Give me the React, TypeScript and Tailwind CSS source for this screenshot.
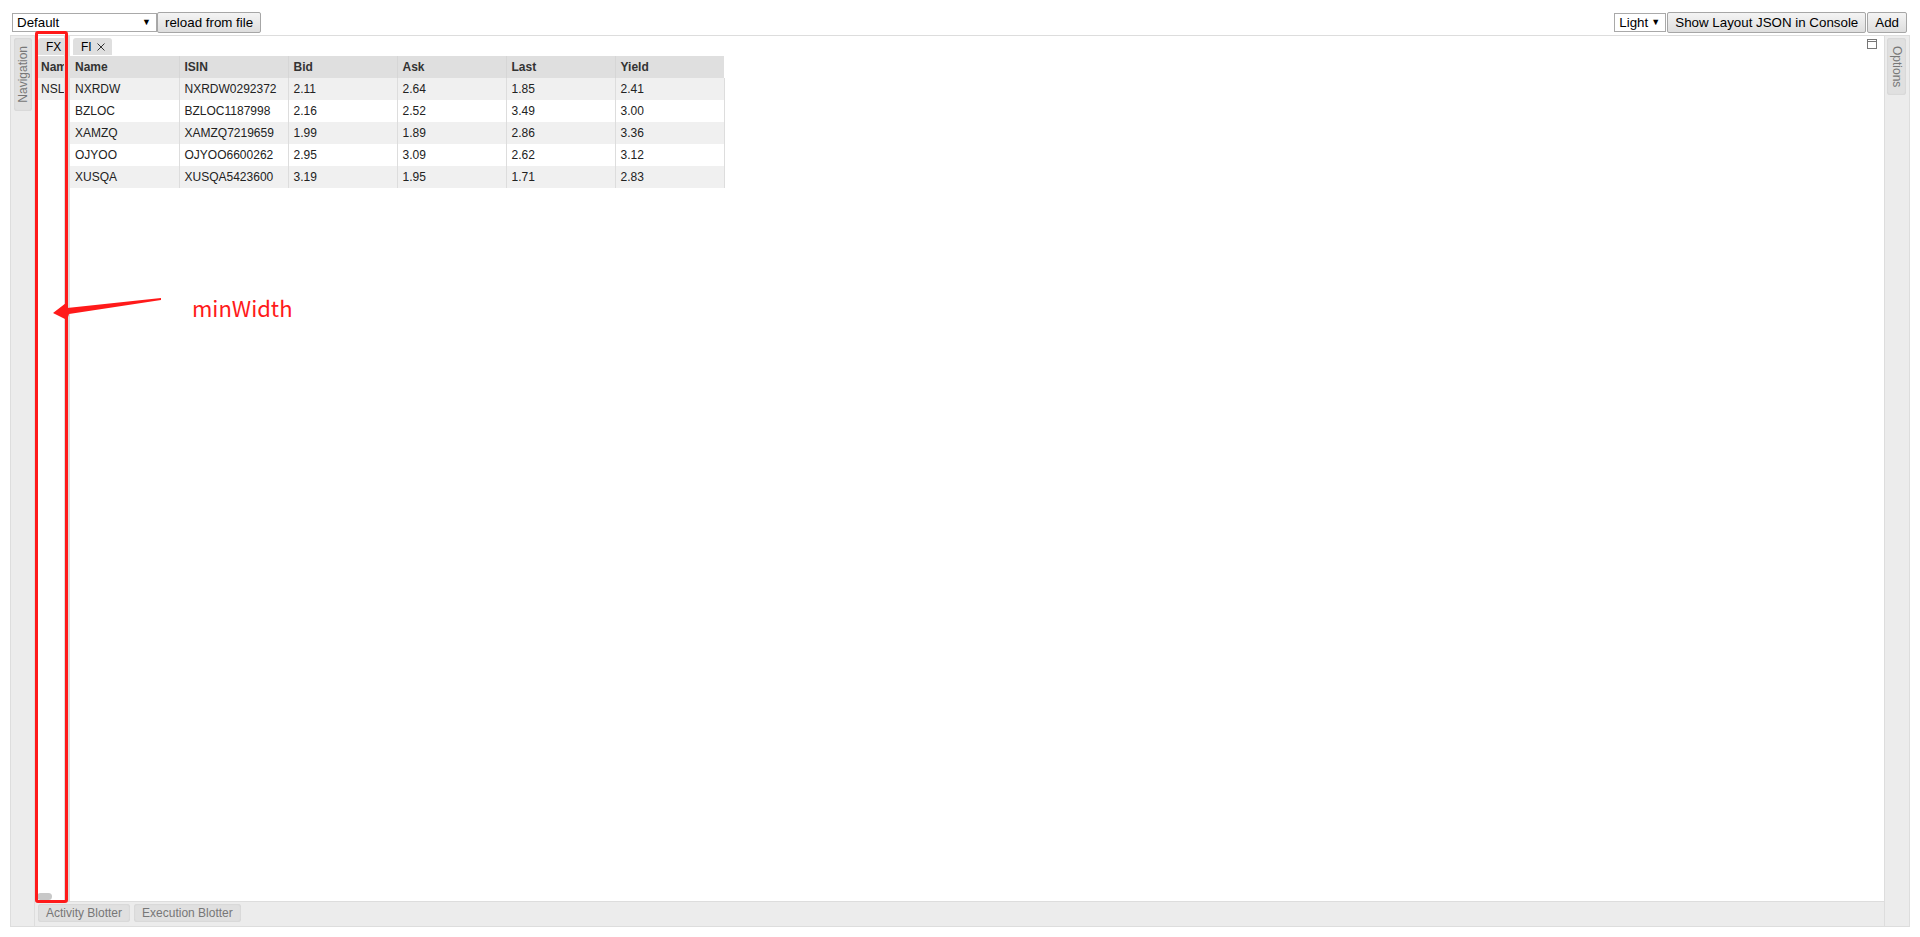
const columns = ["Name", "ISIN", "Bid", "Ask", "Last", "Yield"];

const rows = [
  ["NXRDW", "NXRDW0292372", "2.11", "2.64", "1.85", "2.41"],
  ["BZLOC", "BZLOC1187998", "2.16", "2.52", "3.49", "3.00"],
  ["XAMZQ", "XAMZQ7219659", "1.99", "1.89", "2.86", "3.36"],
  ["OJYOO", "OJYOO6600262", "2.95", "3.09", "2.62", "3.12"],
  ["XUSQA", "XUSQA5423600", "3.19", "1.95", "1.71", "2.83"],
];

const FakeSelect = ({ label, width }: { label: string; width: string }) => (
  <div className={`${width} mt-[1px] h-[19px] border border-[#a9a9a9] bg-white flex items-center justify-between pl-[4px] pr-[5px]`}>
    <span>{label}</span>
    <span className="text-[9px] leading-none">▼</span>
  </div>
);

const ToolButton = ({ label }: { label: string }) => (
  <div className="h-[21px] px-[7px] flex items-center border border-[#a6a6a6] rounded-[2px] bg-gradient-to-b from-[#f4f4f4] to-[#dedede] whitespace-nowrap">
    {label}
  </div>
);

const BorderButton = ({ label, vertical }: { label: string; vertical?: "up" | "down" }) => {
  if (vertical === "up") {
    return (
      <div className="w-[18px] py-[8px] rounded-[3px] bg-[#e0e0e0] shadow-[inset_0_0_2px_rgba(0,0,0,0.12)] flex items-center justify-center text-[#777]">
        <span className="[writing-mode:vertical-rl] rotate-180 whitespace-nowrap">{label}</span>
      </div>
    );
  }
  if (vertical === "down") {
    return (
      <div className="w-[19px] py-[8px] rounded-[3px] bg-[#e0e0e0] shadow-[inset_0_0_2px_rgba(0,0,0,0.12)] flex items-center justify-center text-[#777]">
        <span className="[writing-mode:vertical-rl] whitespace-nowrap">{label}</span>
      </div>
    );
  }
  return (
    <div className="h-[18px] px-[8px] rounded-[3px] bg-[#e0e0e0] shadow-[inset_0_0_2px_rgba(0,0,0,0.12)] flex items-center text-[#777] whitespace-nowrap">
      {label}
    </div>
  );
};

const Tab = ({ label, closable }: { label: string; closable?: boolean }) => (
  <div className="mt-[2px] h-[17px] pl-[8px] pr-[7px] bg-[#dfdfdf] rounded-t-[3px] flex items-center gap-[5px] whitespace-nowrap text-black shrink-0">
    <span>{label}</span>
    {closable && (
      <svg width="8" height="8" viewBox="0 0 8 8" className="text-[#333]">
        <path d="M0.5 0.5 L7.5 7.5 M7.5 0.5 L0.5 7.5" stroke="currentColor" strokeWidth="1" />
      </svg>
    )}
  </div>
);

export default function App() {
  return (
    <div className="relative w-[1920px] h-[937px] overflow-hidden bg-white flex flex-col font-['Liberation_Sans',Arial,sans-serif] text-black">
      {/* toolbar */}
      <div className="h-[35px] shrink-0 flex items-start justify-between pl-[12px] pr-[13px] pt-[12px] text-[13.33px]">
        <div className="flex items-start">
          <FakeSelect label="Default" width="w-[145px]" />
          <ToolButton label="reload from file" />
        </div>
        <div className="flex items-start gap-[1px]">
          <FakeSelect label="Light" width="w-[52px]" />
          <ToolButton label="Show Layout JSON in Console" />
          <ToolButton label="Add" />
        </div>
      </div>

      {/* layout */}
      <div className="mx-[10px] mb-[10px] flex-1 min-h-0 border border-[#ddd] flex text-[12px]">
        {/* left border */}
        <div className="w-[24px] shrink-0 bg-[#ececec] border-r border-[#ddd] pt-[2px] pl-[3px]">
          <BorderButton label="Navigation" vertical="up" />
        </div>

        <div className="flex-1 min-w-0 flex flex-col">
          <div className="flex-1 min-h-0 flex">
            {/* FX tabset */}
            <div className="w-[29px] shrink-0 flex flex-col overflow-hidden">
              <div className="h-[20px] shrink-0 flex pl-[3px]">
                <Tab label="FX" />
              </div>
              <div className="flex-1 flex flex-col">
                <div className="h-[22px] bg-[#dfdfdf] pl-[6px] flex items-center font-bold text-[#333] whitespace-nowrap">Name</div>
                <div className="h-[22px] bg-[#f0f0f0] pl-[6px] flex items-center text-[#222] whitespace-nowrap">NSL</div>
                <div className="mt-auto ml-[2px] mb-[1px] w-[15px] h-[7px] rounded-[4px] bg-[#c8c8c8]"></div>
              </div>
            </div>

            {/* splitter */}
            <div className="w-[6px] shrink-0 bg-[#ddd]"></div>

            {/* FI tabset */}
            <div className="flex-1 min-w-0 flex flex-col">
              <div className="h-[20px] shrink-0 flex items-start justify-between pl-[3px] pr-[7px]">
                <Tab label="FI" closable />
                <svg width="10" height="10" viewBox="0 0 10 10" className="mt-[3px] text-[#777]">
                  <rect x="0.5" y="0.5" width="9" height="9" fill="none" stroke="currentColor" strokeWidth="1" />
                  <path d="M0.5 2.5 H9.5" stroke="currentColor" strokeWidth="1" />
                </svg>
              </div>
              <div className="flex-1">
                <table className="border-collapse table-fixed w-[654px]">
                  <thead>
                    <tr className="bg-[#dfdfdf]">
                      {columns.map((c) => (
                        <th key={c} className="w-[109px] h-[22px] pl-[5px] text-left font-bold text-[#333] border-l border-[#d6d6d6] first:border-l-0">
                          {c}
                        </th>
                      ))}
                    </tr>
                  </thead>
                  <tbody>
                    {rows.map((r, i) => (
                      <tr key={r[0]} className={i % 2 === 0 ? "bg-[#f0f0f0]" : "bg-white"}>
                        {r.map((v, j) => (
                          <td key={j} className="h-[22px] pl-[5px] text-[#222] border-l border-r border-[#ddd] first:border-l-0 whitespace-nowrap">
                            {v}
                          </td>
                        ))}
                      </tr>
                    ))}
                  </tbody>
                </table>
              </div>
            </div>
          </div>

          {/* bottom border */}
          <div className="h-[25px] shrink-0 bg-[#ececec] border-t border-[#ddd] pt-[2px] pl-[3px] flex gap-[4px]">
            <BorderButton label="Activity Blotter" />
            <BorderButton label="Execution Blotter" />
          </div>
        </div>

        {/* right border */}
        <div className="w-[25px] shrink-0 bg-[#ececec] border-l border-[#ddd] pt-[2px] pl-[2px]">
          <BorderButton label="Options" vertical="down" />
        </div>
      </div>

      {/* annotation */}
      <div className="absolute inset-0 pointer-events-none">
        <div className="absolute left-[35px] top-[31px] w-[33px] h-[872px] border-[3px] border-[#ff1a1a] rounded-[3px]"></div>
        <svg className="absolute left-[50px] top-[295px]" width="115" height="28" viewBox="0 0 115 28">
          <polygon points="3,18 16,8 17,13 111,3 111,5 19,19 17,25" fill="#ff1a1a" />
        </svg>
        <div className="absolute left-[192px] top-[296px] text-[22px] leading-none text-[#ff1a1a] font-['Noto_Sans_CJK_SC','Noto_Sans',sans-serif]">
          minWidth
        </div>
      </div>
    </div>
  );
}
